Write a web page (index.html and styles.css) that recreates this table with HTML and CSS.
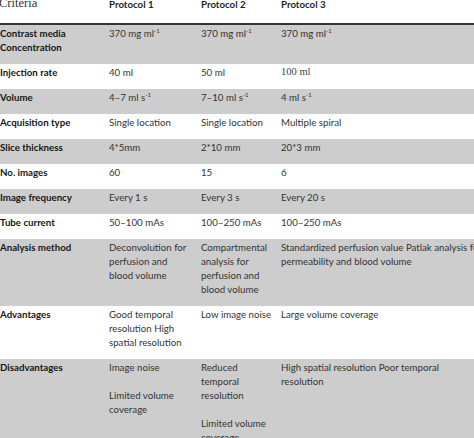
FILE: index.html
```html
<!DOCTYPE html>
<html lang="en">
<head>
<meta charset="utf-8">
<title>CT perfusion protocols</title>
<link rel="stylesheet" href="styles.css">
</head>
<body>
<table class="protocols">
  <colgroup>
    <col class="c1"><col class="c2"><col class="c3"><col class="c4">
  </colgroup>
  <thead>
    <tr>
      <th class="criteria">Criteria</th>
      <th>Protocol 1</th>
      <th>Protocol 2</th>
      <th>Protocol 3</th>
    </tr>
  </thead>
  <tbody>
    <tr class="grey">
      <td class="label">Contrast media<br>Concentration</td>
      <td>370 mg ml<sup>-1</sup></td>
      <td>370 mg ml<sup>-1</sup></td>
      <td>370 mg ml<sup>-1</sup></td>
    </tr>
    <tr>
      <td class="label">Injection rate</td>
      <td>40 ml</td>
      <td>50 ml</td>
      <td class="serif">100 ml</td>
    </tr>
    <tr class="grey">
      <td class="label">Volume</td>
      <td>4–7 ml s<sup>-1</sup></td>
      <td>7–10 ml s<sup>-1</sup></td>
      <td>4 ml s<sup>-1</sup></td>
    </tr>
    <tr>
      <td class="label">Acquisition type</td>
      <td>Single location</td>
      <td>Single location</td>
      <td>Multiple spiral</td>
    </tr>
    <tr class="grey">
      <td class="label">Slice thickness</td>
      <td>4*5mm</td>
      <td>2*10 mm</td>
      <td>20*3 mm</td>
    </tr>
    <tr>
      <td class="label">No. images</td>
      <td>60</td>
      <td>15</td>
      <td>6</td>
    </tr>
    <tr class="grey">
      <td class="label">Image frequency</td>
      <td>Every 1 s</td>
      <td>Every 3 s</td>
      <td>Every 20 s</td>
    </tr>
    <tr>
      <td class="label">Tube current</td>
      <td>50–100 mAs</td>
      <td>100–250 mAs</td>
      <td>100–250 mAs</td>
    </tr>
    <tr class="grey">
      <td class="label">Analysis method</td>
      <td>Deconvolution for<br>perfusion and<br>blood volume</td>
      <td>Compartmental<br>analysis for<br>perfusion and<br>blood volume</td>
      <td>Standardized perfusion value Patlak analysis for<br>permeability and blood volume</td>
    </tr>
    <tr>
      <td class="label">Advantages</td>
      <td>Good temporal<br>resolution High<br>spatial resolution</td>
      <td>Low image noise</td>
      <td>Large volume coverage</td>
    </tr>
    <tr class="grey">
      <td class="label">Disadvantages</td>
      <td><p>Image noise</p><p>Limited volume<br>coverage</p></td>
      <td><p>Reduced<br>temporal<br>resolution</p><p>Limited volume<br>coverage</p></td>
      <td>High spatial resolution Poor temporal<br>resolution</td>
    </tr>
  </tbody>
</table>
</body>
</html>
```

FILE: styles.css
```css
html, body {
  margin: 0;
  padding: 0;
  overflow: hidden;
  background: #ffffff;
}

.protocols {
  width: 474px;
  border-collapse: collapse;
  table-layout: fixed;
  font-family: Lato, "Liberation Sans", sans-serif;
  font-size: 9.7px;
  line-height: 14px;
  color: #333333;
}

.c1 { width: 109px; }
.c2 { width: 92px; }
.c3 { width: 80px; }
.c4 { width: 193px; }

.protocols th {
  height: 23px;
  padding: 0;
  text-align: left;
  vertical-align: top;
  line-height: 9px;
  font-weight: 700;
  color: #1e1e1e;
  border-bottom: 2px solid #333333;
}

.protocols th.criteria {
  font-family: "Liberation Serif", serif;
  font-weight: 400;
  font-size: 12.5px;
  line-height: 6.5px;
  color: #333333;
  text-indent: -1px;
}

.protocols td {
  padding: 1px 0 10px 0;
  vertical-align: top;
  white-space: nowrap;
}

.protocols tr.grey td {
  background: #cdcdcd;
}

.protocols td.label {
  font-weight: 700;
  color: #161616;
}

.protocols td.serif {
  font-family: "Liberation Serif", serif;
  font-size: 10.5px;
  color: #444444;
}

.protocols sup {
  font-size: 6px;
  line-height: 0;
  vertical-align: 4px;
}

.protocols td p {
  margin: 0 0 14px 0;
}

.protocols td p:last-child {
  margin-bottom: 0;
}
```
